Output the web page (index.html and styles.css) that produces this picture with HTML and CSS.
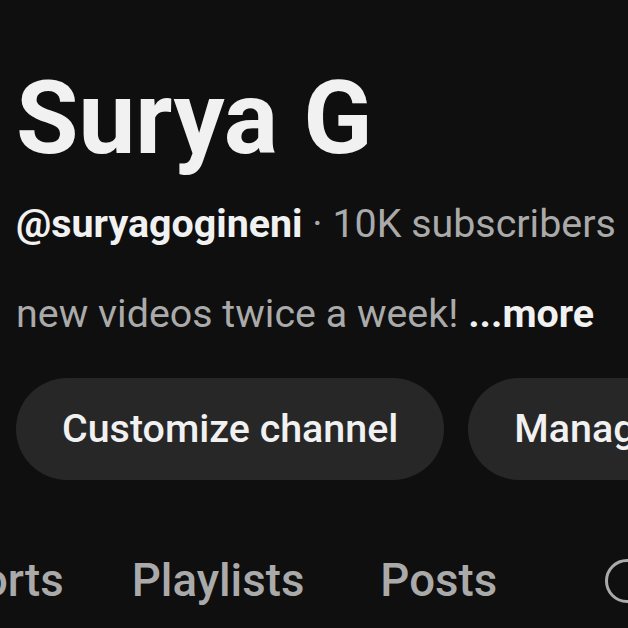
FILE: index.html
```html
<!DOCTYPE html>
<html lang="en">
<head>
<meta charset="utf-8">
<title>Surya G</title>
<link rel="stylesheet" href="styles.css">
</head>
<body>
<main class="channel">
  <h1 class="title">Surya G</h1>
  <div class="meta"><span class="handle">@suryagogineni</span><span class="sep"> · </span><span>10K subscribers</span></div>
  <div class="desc">new videos twice a week! <span class="more">...more</span></div>
  <div class="actions">
    <button class="btn">Customize channel</button>
    <button class="btn">Manage videos</button>
  </div>
  <nav class="tabs">
    <span class="tab tab-first">Shorts</span>
    <span class="tab">Playlists</span>
    <span class="tab">Posts</span>
    <svg class="search" width="48" height="48" viewBox="0 0 48 48" aria-hidden="true">
      <circle cx="24" cy="24" r="20.5" fill="none" stroke="#aaaaaa" stroke-width="3"/>
      <line x1="39" y1="39" x2="60" y2="60" stroke="#aaaaaa" stroke-width="3"/>
    </svg>
  </nav>
</main>
</body>
</html>
```

FILE: styles.css
```css
html, body {
  margin: 0;
  padding: 0;
  background: #0f0f0f;
  overflow: hidden;
}
body {
  width: 628px;
  height: 628px;
  font-family: Roboto, "Liberation Sans", Arial, sans-serif;
  color: #f1f1f1;
}
.channel {
  padding-left: 16px;
  display: flex;
  flex-direction: column;
}
.title {
  margin: 68px 0 0;
  font-size: 101.5px;
  line-height: 102px;
  font-weight: 700;
  white-space: nowrap;
}
.meta {
  margin-top: 34px;
  font-size: 39.4px;
  line-height: 40px;
  color: #aaaaaa;
  white-space: nowrap;
}
.handle {
  color: #f1f1f1;
  font-weight: 700;
}
.desc {
  margin-top: 50px;
  font-size: 39.4px;
  line-height: 40px;
  color: #aaaaaa;
  white-space: nowrap;
}
.more {
  color: #f1f1f1;
  font-weight: 700;
}
.actions {
  margin-top: 44px;
  display: flex;
  gap: 24px;
  white-space: nowrap;
}
.btn {
  flex: none;
  height: 102px;
  padding: 0 46px;
  border: none;
  border-radius: 51px;
  background: #272727;
  color: #f1f1f1;
  font-family: inherit;
  font-size: 39.4px;
  font-weight: 500;
  line-height: 40px;
}
.tabs {
  margin-top: 77px;
  margin-left: -87px;
  display: flex;
  align-items: center;
  gap: 76px;
  white-space: nowrap;
  font-size: 45.6px;
  line-height: 46px;
  font-weight: 500;
  color: #aaaaaa;
}
.tab {
  flex: none;
}
.tab-first {
  margin-right: -8px;
}
.search {
  flex: none;
  overflow: visible;
  margin-left: 30px;
}
```
